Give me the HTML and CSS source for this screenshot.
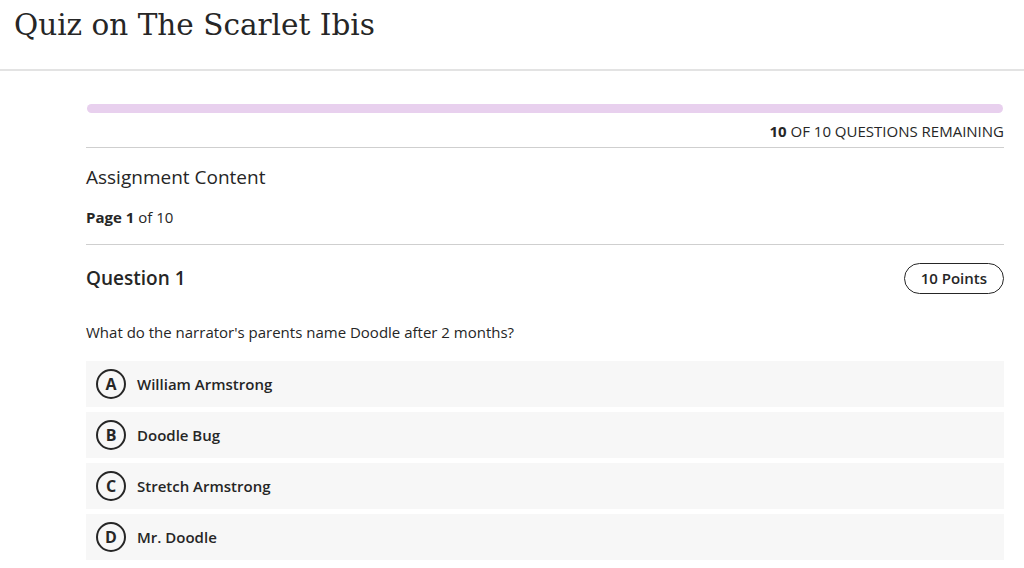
FILE: index.html
```html
<!DOCTYPE html>
<html lang="en">
<head>
  <meta charset="UTF-8">
  <meta name="viewport" content="width=device-width, initial-scale=1.0">
  <title>Quiz on The Scarlet Ibis</title>
  <link rel="stylesheet" href="styles.css">
</head>
<body>
  <header id="top">
    <h1 id="title">Quiz on The Scarlet Ibis</h1>
  </header>

  <main id="quiz">
    <div class="progress"></div>
    <p class="remaining"><b>10</b> OF 10 QUESTIONS REMAINING</p>

    <section class="content">
      <h2 class="content-title">Assignment Content</h2>
      <p class="page"><b>Page 1</b> of 10</p>
    </section>

    <section class="question">
      <div class="question-head">
        <h3 class="question-title">Question 1</h3>
        <span class="points">10 Points</span>
      </div>
      <p class="prompt">What do the narrator's parents name Doodle after 2 months?</p>
      <div class="options">
        <div class="option"><span class="letter">A</span>William Armstrong</div>
        <div class="option"><span class="letter">B</span>Doodle Bug</div>
        <div class="option"><span class="letter">C</span>Stretch Armstrong</div>
        <div class="option"><span class="letter">D</span>Mr. Doodle</div>
      </div>
    </section>
  </main>
</body>
</html>
```

FILE: styles.css
```css
body {
  margin: 0;
  font-family: 'Open Sans', sans-serif;
  color: #262626;
  background: #fff;
}
#top {
  height: 69px;
  border-bottom: 2px solid #e3e3e3;
  padding-left: 14px;
}
#title {
  margin: 0;
  padding-top: 5px;
  font-family: 'DejaVu Serif', 'Liberation Serif', serif;
  font-weight: normal;
  font-size: 29.5px;
  line-height: 40px;
  color: #262626;
}
#quiz {
  width: 918px;
  margin: 0 0 0 86px;
  padding-top: 33px;
}
.progress {
  height: 9px;
  margin-left: 1px;
  margin-right: 1px;
  border-radius: 5px;
  background: #e8d0ee;
}
.remaining {
  margin: 8px 0 0;
  text-align: right;
  font-size: 15px;
  line-height: 20px;
  padding-bottom: 6px;
  border-bottom: 1px solid #cfcfcf;
}
.remaining b {
  font-weight: 700;
}
.content {
  border-bottom: 1px solid #cfcfcf;
  padding: 16px 0 17px;
}
.content-title {
  margin: 0;
  font-size: 19px;
  font-weight: 400;
  line-height: 26px;
}
.page {
  margin: 17px 0 0;
  font-size: 15px;
  line-height: 20px;
}
.page b {
  font-weight: 700;
}
.question {
  padding-top: 17px;
}
.question-head {
  display: flex;
  align-items: center;
  justify-content: space-between;
  height: 32px;
}
.question-title {
  margin: 0;
  font-size: 19px;
  font-weight: 600;
  line-height: 32px;
}
.points {
  height: 29px;
  line-height: 29px;
  padding: 0 16px;
  border: 1.5px solid #262626;
  border-radius: 16px;
  font-size: 15px;
  font-weight: 600;
}
.prompt {
  margin: 28px 0 0;
  font-size: 15px;
  line-height: 20px;
}
.options {
  display: flex;
  flex-direction: column;
  gap: 5px;
  margin-top: 19px;
}
.option {
  display: flex;
  align-items: center;
  gap: 11px;
  height: 46px;
  padding-left: 10px;
  background: #f7f7f7;
  font-size: 15px;
  font-weight: 600;
}
.letter {
  width: 26px;
  height: 26px;
  border: 2px solid #262626;
  border-radius: 50%;
  display: flex;
  align-items: center;
  justify-content: center;
  font-size: 16px;
  font-weight: 700;
}
```
